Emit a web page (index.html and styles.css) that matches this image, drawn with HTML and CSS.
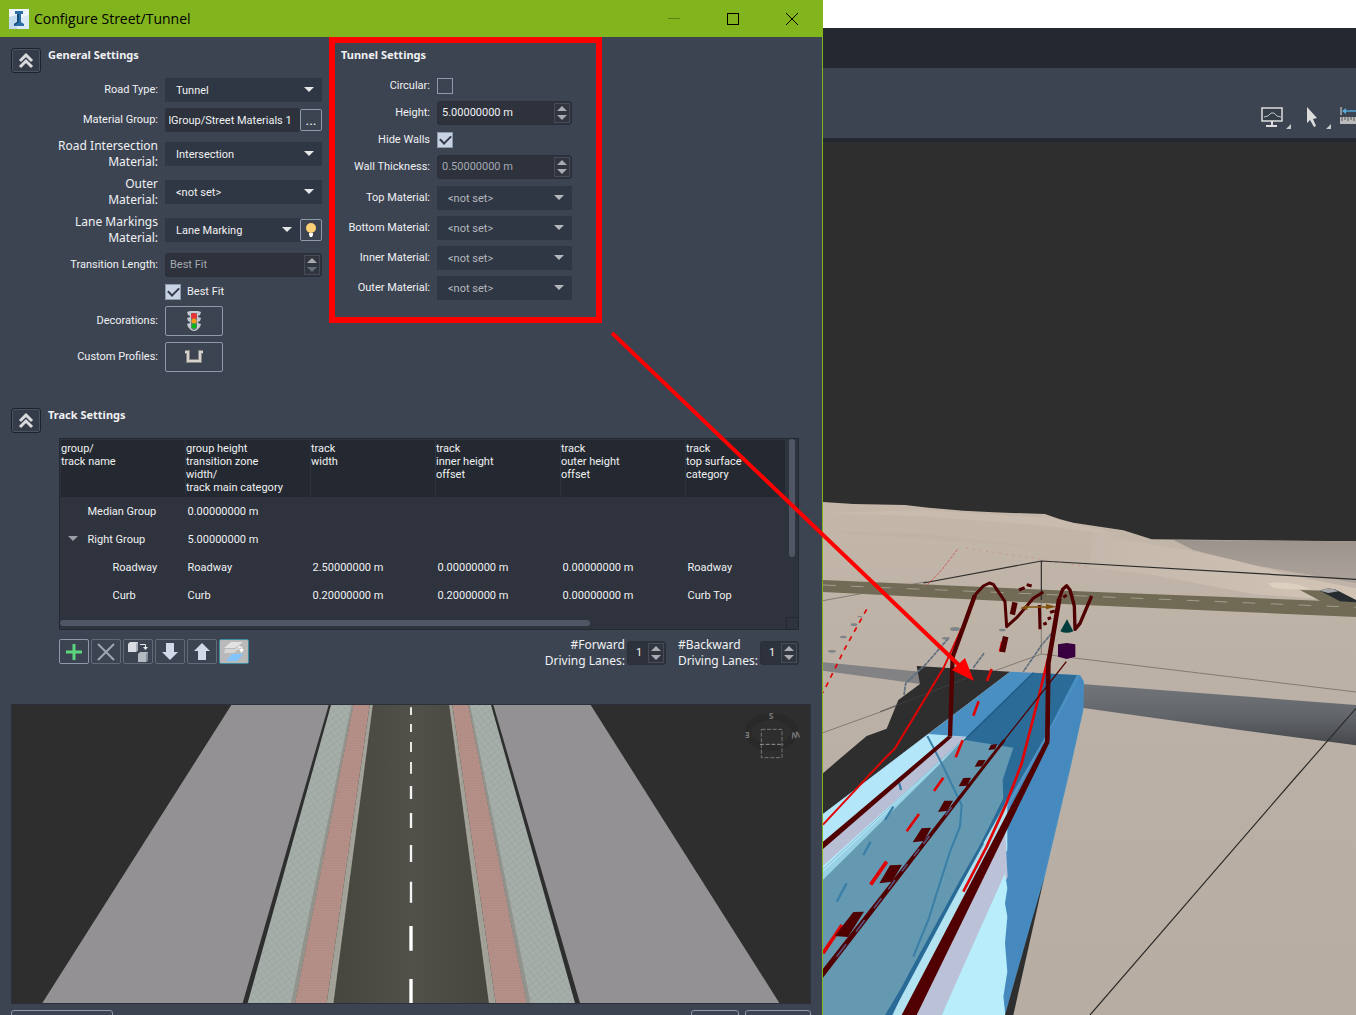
FILE: index.html
```
<!DOCTYPE html>
<html lang="en">
<head>
  <meta charset="UTF-8">
  <meta name="viewport" content="width=device-width, initial-scale=1.0">
  <title>Configure Street/Tunnel</title>
  <link rel="stylesheet" href="styles.css">
</head>
<body>
  <main class="dialog">
    <header class="titlebar">
      <svg class="app-icon" viewBox="0 0 20 20">
        <rect width="20" height="20" fill="#dce9f6"/>
        <path d="M0 0H20V6L0 14Z" fill="#eef5fc"/>
        <path d="M0 8L8 6V20H0Z" fill="#c3d9ee"/>
        <path d="M6 2H14V5H12V13L15 15V17H5V15L8 13V5H6Z" fill="#2b6ea5"/>
        <path d="M8 5H10V13L6 16H5V15L8 13Z" fill="#174a78"/>
      </svg>
      <h1 class="window-title">Configure Street/Tunnel</h1>
      <div class="window-buttons">
        <button class="window-button dim" aria-label="Minimize"><svg viewBox="0 0 12 12"><path d="M0 5.5H12"/></svg></button>
        <button class="window-button" aria-label="Maximize"><svg viewBox="0 0 12 12"><rect x=".5" y=".5" width="11" height="11"/></svg></button>
        <button class="window-button" aria-label="Close"><svg viewBox="0 0 12 12"><path d="M0 0L12 12M12 0L0 12"/></svg></button>
      </div>
    </header>

    <section class="panel">
      <button class="collapse" aria-label="Collapse general settings"><svg viewBox="0 0 16 16"><path d="M2 8L8 2L14 8M2 14L8 8L14 14"/></svg></button>
      <div class="general">
        <h2 class="heading">General Settings</h2>
        <form class="fields">
          <label for="road-type">Road Type:</label>
          <span class="select"><select id="road-type"><option>Tunnel</option></select></span>

          <label for="material-group">Material Group:</label>
          <div class="joined">
            <input id="material-group" class="text" type="text" value="MaterialGroup/Street Materials 1">
            <button type="button" class="small-button">...</button>
          </div>

          <label for="intersection" class="large">Road Intersection<br>Material:</label>
          <span class="select"><select id="intersection"><option>Intersection</option></select></span>

          <label for="outer" class="large">Outer<br>Material:</label>
          <span class="select"><select id="outer"><option>&lt;not set&gt;</option></select></span>

          <label for="markings" class="large">Lane Markings<br>Material:</label>
          <div class="joined">
            <span class="select"><select id="markings"><option>Lane Marking</option></select></span>
            <button type="button" class="small-button" aria-label="Highlight">
              <svg width="12" height="16" viewBox="0 0 12 16"><circle cx="6" cy="6" r="5" fill="#fbcf73"/><path d="M4 11H8V13L7 15H5L4 13Z" fill="#fff"/></svg>
            </button>
          </div>

          <label for="transition">Transition Length:</label>
          <div class="spin disabled">
            <input id="transition" type="text" value="Best Fit" disabled>
            <span class="arrows"><button type="button" class="up" aria-label="Increase"></button><button type="button" class="down faded" aria-label="Decrease"></button></span>
          </div>

          <label class="check second"><input type="checkbox" checked>Best Fit</label>

          <label for="decorations">Decorations:</label>
          <button type="button" id="decorations" class="wide-button" aria-label="Decorations">
            <svg width="18" height="20" viewBox="0 0 18 20">
              <path d="M2 1L5 0H13L16 1L15 4L13 5V6L16 7L15 10L13 11V12L16 13L15 16L12 19L10 20H8L6 19L3 16L2 13L5 12V11L3 10L2 7L5 6V5L3 4Z" fill="#c3c9cf"/>
              <path d="M6 2H12V17L10 19H8L6 17Z" fill="#70787d"/>
              <circle cx="9" cy="5" r="3" fill="#e83434"/><circle cx="9" cy="10" r="2.5" fill="#f79a16"/><circle cx="9" cy="15" r="2.5" fill="#08b51d"/>
            </svg>
          </button>

          <label for="profiles">Custom Profiles:</label>
          <button type="button" id="profiles" class="wide-button" aria-label="Custom profiles">
            <svg width="20" height="16" viewBox="0 0 20 16"><path d="M1 3H4V12H16V3H19" fill="none" stroke="#858585" stroke-width="4"/><path d="M1 3H4V12H16V3H19" fill="none" stroke="#d6d3cd" stroke-width="2"/></svg>
          </button>
        </form>
      </div>

      <div class="tunnel">
        <h2 class="heading">Tunnel Settings</h2>
        <form class="fields">
          <label for="circular">Circular:</label>
          <span class="check"><input id="circular" type="checkbox"></span>

          <label for="height">Height:</label>
          <div class="spin">
            <input id="height" type="text" value="5.00000000 m">
            <span class="arrows"><button type="button" class="up" aria-label="Increase"></button><button type="button" class="down" aria-label="Decrease"></button></span>
          </div>

          <label for="hide-walls">Hide Walls</label>
          <span class="check"><input id="hide-walls" type="checkbox" checked></span>

          <label for="thickness">Wall Thickness:</label>
          <div class="spin disabled">
            <input id="thickness" type="text" value="0.50000000 m" disabled>
            <span class="arrows"><button type="button" class="up" aria-label="Increase"></button><button type="button" class="down" aria-label="Decrease"></button></span>
          </div>

          <label for="top-material">Top Material:</label>
          <span class="select"><select id="top-material" disabled><option>&lt;not set&gt;</option></select></span>
          <label for="bottom-material">Bottom Material:</label>
          <span class="select"><select id="bottom-material" disabled><option>&lt;not set&gt;</option></select></span>
          <label for="inner-material">Inner Material:</label>
          <span class="select"><select id="inner-material" disabled><option>&lt;not set&gt;</option></select></span>
          <label for="outer-material">Outer Material:</label>
          <span class="select"><select id="outer-material" disabled><option>&lt;not set&gt;</option></select></span>
        </form>
      </div>
    </section>

    <section class="panel">
      <button class="collapse" aria-label="Collapse track settings"><svg viewBox="0 0 16 16"><path d="M2 8L8 2L14 8M2 14L8 8L14 14"/></svg></button>
      <div class="track">
        <h2 class="heading">Track Settings</h2>
        <div class="tracks">
          <table>
            <thead>
              <tr>
                <th>group/<br>track name</th>
                <th>group height<br>transition zone<br>width/<br>track main category</th>
                <th>track<br>width</th>
                <th>track<br>inner height<br>offset</th>
                <th>track<br>outer height<br>offset</th>
                <th class="last">track<br>top surface<br>category</th>
              </tr>
            </thead>
            <tbody>
              <tr><td class="group">Median Group</td><td>0.00000000 m</td><td></td><td></td><td></td><td></td></tr>
              <tr><td class="group open">Right Group</td><td>5.00000000 m</td><td></td><td></td><td></td><td></td></tr>
              <tr><td class="child">Roadway</td><td>Roadway</td><td>2.50000000 m</td><td>0.00000000 m</td><td>0.00000000 m</td><td>Roadway</td></tr>
              <tr><td class="child">Curb</td><td>Curb</td><td>0.20000000 m</td><td>0.20000000 m</td><td>0.00000000 m</td><td>Curb Top</td></tr>
            </tbody>
          </table>
          <div class="vscroll"><div class="thumb"></div></div>
          <div class="hscroll"><div class="thumb"></div></div>
          <div class="corner"></div>
        </div>

        <div class="track-bar">
          <button class="tool bright" aria-label="Add track"><svg viewBox="0 0 28 23"><path d="M6 12H22M14 4V20" stroke="#5cd67d" stroke-width="3"/></svg></button>
          <button class="tool" aria-label="Delete track"><svg viewBox="0 0 28 23"><path d="M6 4L22 20M22 4L6 20" stroke="#9fa6b3" stroke-width="2"/></svg></button>
          <button class="tool" aria-label="Duplicate track">
            <svg viewBox="0 0 28 23">
              <path d="M4 4L6 2H14V10L12 12H4Z" fill="#d9dce2"/><path d="M12 4L14 2V10L12 12Z" fill="#a9adb5"/>
              <path d="M14 14L16 12H24V20L22 22H14Z" fill="#b5b9c0"/><path d="M22 14L24 12V20L22 22Z" fill="#858b96"/>
              <path d="M16 4.5H21.5V8" fill="none" stroke="#e8eaee"/><path d="M19 7H24L21.500 10Z" fill="#e8eaee"/>
            </svg>
          </button>
          <button class="tool" aria-label="Move down"><svg viewBox="0 0 28 23"><path d="M10 3H18V12H22L14 20L6 12H10Z" fill="#d2daea"/></svg></button>
          <button class="tool" aria-label="Move up"><svg viewBox="0 0 28 23"><path d="M10 20H18V11H22L14 3L6 11H10Z" fill="#d2daea"/></svg></button>
          <button class="tool active" aria-label="Show layers">
            <svg viewBox="0 0 28 23">
              <path d="M11 2H23L15 8H4Z" fill="#e2e2e2"/><path d="M5 9H15L20 5V8L14 13H4Z" fill="#d5d5d5"/>
              <path d="M12 14H23L17 21H6Z" fill="#82c4ff"/><path d="M18 7H21.500V10" fill="none" stroke="#fff"/><path d="M19 9H24L21.500 13Z" fill="#fff"/>
            </svg>
          </button>
          <label for="forward" class="large push">#Forward<br>Driving Lanes:</label>
          <div class="spin short">
            <input id="forward" type="text" value="1">
            <span class="arrows"><button class="up" aria-label="Increase"></button><button class="down" aria-label="Decrease"></button></span>
          </div>
          <label for="backward" class="large backward">#Backward<br>Driving Lanes:</label>
          <div class="spin short">
            <input id="backward" type="text" value="1">
            <span class="arrows"><button class="up" aria-label="Increase"></button><button class="down" aria-label="Decrease"></button></span>
          </div>
        </div>
      </div>
    </section>

    <div class="preview">
      <svg viewBox="36 45 2394 894" preserveAspectRatio="xMidYMid slice">
        <defs>
          <pattern id="tiles" width="22" height="22" patternUnits="userSpaceOnUse" patternTransform="rotate(8)">
            <path d="M0 0L22 22M22 0L0 22" stroke="#818b86" stroke-width="1.5" opacity=".5"/>
          </pattern>
          <pattern id="bricks" width="12" height="10" patternUnits="userSpaceOnUse">
            <path d="M0 1H12M2 1V6M0 6H12M8 6V10" stroke="#946f6a" stroke-width="1.2" opacity=".5"/>
          </pattern>
          <linearGradient id="asphalt">
            <stop offset="0" stop-color="#46463f"/><stop offset=".5" stop-color="#51514a"/><stop offset="1" stop-color="#46463f"/>
          </linearGradient>
        </defs>
        <rect x="36" y="45" width="2394" height="894" fill="#2e2e2e"/>
        <path d="M694 45H986L728 939H127ZM1480 45H1772L2338 939H1740Z" fill="#949194"/>
        <path d="M993 45H1060L885 939H743ZM1405 45H1473L1725 939H1580Z" fill="#a5aea9"/>
        <path d="M993 45H1060L885 939H743ZM1405 45H1473L1725 939H1580Z" fill="url(#tiles)"/>
        <path d="M1060 45H1109L980 939H885ZM1357 45H1405L1580 939H1487Z" fill="#b8938b"/>
        <path d="M1060 45H1109L980 939H885ZM1357 45H1405L1580 939H1487Z" fill="url(#bricks)"/>
        <path d="M1054 45H1060L885 939H873ZM1405 45H1410L1592 939H1580Z" fill="#92938c"/>
        <path d="M1109 45H1117L999 939H980ZM1349 45H1357L1487 939H1468Z" fill="#a1a198"/>
        <path d="M1117 45H1349L1468 939H999Z" fill="url(#asphalt)"/>
        <path d="M1117 45L999 939M1349 45L1468 939" stroke="#c5c5bd" stroke-width="2"/>
        <path d="M1233 52V75M1233 102V126M1233 156V186M1233 216V251" stroke="#e6e6e4" stroke-width="6"/>
        <path d="M1233 288V327M1233 369V414M1233 465V516M1233 575V638" stroke="#f3f3f3" stroke-width="7"/>
        <path d="M1233 708V782M1233 867V939" stroke="#fff" stroke-width="10"/>
        <ellipse cx="2314" cy="126" rx="70" ry="46" fill="none" stroke="#292929" stroke-width="20"/>
        <g fill="none" stroke="#858585" stroke-width="2.5" stroke-dasharray="12 5">
          <path d="M2284 118H2346V203H2284Z"/><path d="M2280 163H2350" stroke="#aaa"/>
        </g>
        <g class="compass">
          <text x="2306" y="86">S</text>
          <text x="2242" y="126" transform="rotate(180 2242 132)" text-anchor="middle" dy="12">E</text>
          <text x="2386" y="126" transform="rotate(170 2386 132)" text-anchor="middle" dy="12">W</text>
        </g>
      </svg>
    </div>

    <footer class="actions">
      <button class="action" aria-label="Help"></button>
      <button class="action ok" aria-label="OK"></button>
      <button class="action cancel" aria-label="Cancel"></button>
    </footer>
  </main>

  <aside class="model">
    <div class="model-menu"></div>
    <div class="model-tools">
      <button class="model-tool" aria-label="View">
        <svg width="38" height="24" viewBox="0 0 38 24">
          <rect x="2" y="2" width="20" height="13" fill="#353d49" stroke="#dcdcdc" stroke-width="1.5"/>
          <path d="M4 11L8 10L11 7L14 7L17 10L21 11" fill="none" stroke="#bfc3c8"/>
          <path d="M11 15H13V19H17V21H6V19H11Z" fill="#dcdcdc"/><path d="M31 18V23H26Z" fill="#c5c7ca"/>
        </svg>
      </button>
      <button class="model-tool" aria-label="Select">
        <svg width="26" height="24" viewBox="0 0 26 24"><path d="M1 1V17L4 14L8 21L10 20L7 13L11 12Z" fill="#dcdcdc"/><path d="M25 18V23H20Z" fill="#c5c7ca"/></svg>
      </button>
      <button class="model-tool" aria-label="Measure">
        <svg width="16" height="24" viewBox="0 0 16 24"><path d="M1 1V9" stroke="#ddd"/><path d="M3 5H16" stroke="#4c8db5" stroke-width="2"/><path d="M6 2V8L2 5Z" fill="#5bacd8"/><rect y="11" width="16" height="7" fill="#bcbcbc"/><path d="M2 11V15M5 11V14M8 11V15M11 11V14M14 11V15" stroke="#555"/></svg>
      </button>
    </div>

    <svg class="scene" viewBox="9 -1044 1599 2619" preserveAspectRatio="xMinYMin slice">
      <defs>
        <linearGradient id="ground" x1="0" y1="0" x2="0" y2="1"><stop offset="0" stop-color="#c4b7aa"/><stop offset=".3" stop-color="#bcb1a6"/><stop offset="1" stop-color="#b7ada2"/></linearGradient>
        <linearGradient id="wall" x1="0" y1="0" x2="0" y2="1"><stop offset="0" stop-color="#71757a"/><stop offset=".5" stop-color="#63676c"/><stop offset="1" stop-color="#45474a"/></linearGradient>
        <linearGradient id="hill" x1="0" y1="0" x2="1" y2="0"><stop offset="0" stop-color="#c4b8ac"/><stop offset="1" stop-color="#d2c4b5"/></linearGradient>
        <linearGradient id="far" x1="0" y1="0" x2="0" y2="1"><stop offset="0" stop-color="#9c938d"/><stop offset="1" stop-color="#ada39b"/></linearGradient>
      </defs>
      <!-- sky and terrain -->
      <rect x="9" y="-1044" width="1599" height="2619" fill="#2e2e2e"/>
      <path d="M9 36L100 42L255 45L325 53L430 62L520 67L675 72L720 88L760 98L910 121L995 148L1608 154V1575H9Z" fill="url(#ground)"/>
      <path d="M1060 150L1608 154V280L1440 250L1300 225L1120 180Z" fill="url(#far)"/>
      <path d="M820 118L905 148L1110 182L1240 210L1440 262L1608 295V335L1300 312L1000 255L810 232Z" fill="url(#hill)"/>
      <path d="M9 70L300 60L700 85L900 135L650 105L300 78Z" fill="#c9bcaf"/>
      <path d="M9 125L300 130L700 175L350 150Z" fill="#bfb3a7"/>
      <path d="M1345 280Q1410 270 1470 296Q1400 300 1360 293Z" fill="#ddd0c1"/>
      <!-- cross road -->
      <path d="M9 270L810 305L1500 332L1440 300L1530 302L1608 330V381L810 346L9 306Z" fill="#716b55"/>
      <path d="M9 285L860 321L1608 352" fill="none" stroke="#a19d8b" stroke-width="3" stroke-dasharray="38 46"/>
      <path d="M1500 302Q1530 288 1560 305L1608 330V337L1560 334Z" fill="#252b2e"/>
      <path d="M1500 302Q1530 288 1555 304L1525 309Z" fill="#a4a5a7"/>
      <!-- retaining wall -->
      <path d="M9 517L300 545V582L9 542Z" fill="#828183"/>
      <path d="M785 582L1608 645V766L1260 720L785 653Z" fill="url(#wall)"/>
      <g fill="none" stroke="#777068" stroke-width="2.5">
        <path d="M9 332L320 275M664 492L1608 606M664 492L9 728M664 330V492"/>
        <path d="M310 279L664 213L1608 268M664 213V330M1608 655L1420 870L810 1575" stroke="#2c2b2a" stroke-width="3.5"/>
      </g>
      <path d="M322 284L365 240L415 175" fill="none" stroke="#d24b48" stroke-width="2.5" stroke-dasharray="9 4"/>
      <path d="M440 175L520 187L660 207L800 230" fill="none" stroke="#d07b74" stroke-width="3" stroke-dasharray="3 17"/>
      <!-- trench -->
      <path d="M290 528L570 545L300 750L9 972V850L55 810L140 738L200 716L235 630L300 582Z" fill="#2e2e2e"/>
      <path d="M180 665L450 560" stroke="#444" stroke-width="2"/>
      <!-- tunnel -->
      <path d="M570 545L780 555L792 575L790 660L750 840L672 1170L555 1575H9V972L325 732Z" fill="#4a8fc1"/>
      <path d="M780 557L670 750L560 950L610 940L740 740L792 575Z" fill="#5a99cb"/>
      <path d="M780 557L668 760L570 940L555 1200V1575L672 1150L755 800L790 655V575Z" fill="#4589be"/>
      <path d="M640 548L770 556L670 750L560 940L215 1575H9V1170L370 808Z" fill="#2b6b98"/>
      <path d="M640 548L370 812" stroke="#205b85" stroke-width="4"/>
      <path d="M435 750L580 773L548 870L550 925L480 1065L420 1170L300 1390L240 1500L195 1575H9V1170L370 810Z" fill="#6499b1"/>
      <path d="M325 732L440 740L9 1165V972Z" fill="#b2e6f8"/>
      <path d="M395 738L438 742L9 1128V1065Z" fill="#b8bed4"/>
      <path d="M440 742L9 1145V1170L370 812Z" fill="#98d1e4"/>
      <path d="M425 752L9 1138" stroke="#6ea6bf" stroke-width="2"/>
      <path d="M562 925L215 1575H300L562 1080Z" fill="#b3e2f1"/>
      <path d="M555 1025L563 1160L365 1575H270Z" fill="#bbc1d7"/>
      <path d="M555 1150L562 1195L555 1240L562 1280L555 1360L562 1445L550 1520L556 1575H365Z" fill="#b8eefc"/>
      <path d="M672 1165L580 1575H555L630 1310Z" fill="#2e2e2e"/>
      <path d="M555 940L480 1070M490 1060L270 1450L215 1575" fill="none" stroke="#266995" stroke-width="6" opacity=".7"/>
      <!-- shadows of the guide wires -->
      <g fill="none" stroke="#397fa8" stroke-width="7">
        <path d="M322 738L365 820L425 945L420 1010L390 1085L350 1210L325 1290L300 1350L280 1400" stroke-width="6"/>
        <path d="M152 1055L130 1095M80 1180L50 1235M238 880L243 900M220 950L195 990"/>
      </g>
      <g fill="none" stroke="#5f6e7e" stroke-width="5">
        <path d="M695 430L665 465L610 545M492 490L460 533M385 445L320 520L257 580L252 615" stroke-dasharray="12 2"/>
      </g>
      <g fill="#7f8488"><ellipse cx="405" cy="417" rx="15" ry="6"/><ellipse cx="378" cy="445" rx="12" ry="4"/><ellipse cx="547" cy="420" rx="10" ry="4"/><ellipse cx="102" cy="404" rx="10" ry="4"/><ellipse cx="70" cy="441" rx="10" ry="4"/><ellipse cx="36" cy="484" rx="12" ry="4"/><ellipse cx="120" cy="380" rx="8" ry="2"/></g>
      <!-- red guide lines -->
      <g fill="none" stroke="#e00505">
        <path d="M140 358L75 475L9 608" stroke-width="5" stroke-dasharray="15 16"/>
        <path d="M425 415L370 535L225 775L190 810L9 1004" stroke-width="6"/>
        <path d="M688 490L655 625L605 820L590 860L555 950L500 1070L430 1205" stroke-width="8"/>
        <path d="M515 537L501 573M476 634L460 677M428 751L407 802M370 863L342 903M297 972L260 1024M547 455L540 485" stroke-width="8"/>
        <path d="M200 1115L152 1184M66 1305L9 1390" stroke-width="11"/>
      </g>
      <g fill="none" stroke="#500000" stroke-linejoin="round">
        <path d="M390 740L398 500L465 315" stroke-width="13"/>
        <path d="M465 315L490 288L508 279L520 283L555 335L560 410L590 383L640 325L670 306" stroke-width="9"/>
        <path d="M682 755L685 520L718 325" stroke-width="14"/>
        <path d="M718 325L728 298L740 287L750 300L763 348L765 418L780 400L815 318" stroke-width="10"/>
        <path d="M658 345L660 418" stroke-width="9"/>
        <path d="M739 515L640 640L545 760" stroke-width="4"/>
        <path d="M585 337L577 374" stroke-width="16"/>
        <path d="M557 440L547 486" stroke-width="17"/>
        <path d="M597 300L614 293M620 284L635 288M690 367L704 363M683 387L693 383M670 403L680 399M730 322L740 315" stroke-width="9"/>
      </g>
      <g fill="#500000">
        <path d="M384 738L396 742L9 1077V1055Z"/>
        <path d="M676 752L689 757L290 1575H245Z"/>
        <path d="M550 748L557 752L9 1463V1436Z"/>
        <path d="M513 764L532 762L525 778L505 780Z"/><path d="M475 811L497 810L486 829L464 830Z"/><path d="M430 864L453 863L442 887L416 889Z"/><path d="M373 932L399 932L382 962L354 966Z"/><path d="M305 1015L333 1013L312 1053L278 1057Z"/><path d="M210 1126L246 1124L216 1175L178 1180Z"/><path d="M100 1266L132 1265L84 1341L44 1338Z"/>
      </g>
      <path d="M395 952L376 976M328 1038L310 1062M298 1077L282 1098M262 1122L246 1144M225 1170L205 1198M184 1225L162 1255M134 1290L108 1325M78 1363L50 1400" stroke="#58517c" stroke-width="5"/>
      <!-- gizmo -->
      <path d="M600 355L622 344V349H678V342L710 350L678 358V353H622V360Z" fill="#81500d"/>
      <path d="M741 388L760 424Q740 433 721 424Z" fill="#003d3c"/>
      <path d="M714 463L740 459L766 463V500L740 507L714 500Z" fill="#39003f"/>
    </svg>
  </aside>

  <svg class="callout" width="363" height="350" viewBox="0 0 363 350" aria-hidden="true">
    <path d="M1 1L350 335" stroke="#f00" stroke-width="4"/>
    <path d="M363 349L341 338L354 326Z" fill="#f00"/>
  </svg>

  <script>
    // long material paths show their end
    var group = document.getElementById('material-group');
    group.scrollLeft = group.scrollWidth;
  </script>
</body>
</html>
```
FILE: styles.css
```
* {
  box-sizing: border-box;
}

body {
  margin: 0;
  height: 100vh;
  display: grid;
  grid-template-columns: minmax(760px, 823fr) minmax(0, 533fr);
  overflow: hidden;
  position: relative;
  background-color: #fff;
  color: #f0f1f2;
  font-family: Roboto, "Noto Sans", sans-serif;
  font-size: 11px;
  line-height: 16px;
}

button, input, select {
  margin: 0;
  padding: 0;
  border: 0;
  outline: 0;
  border-radius: 0;
  background: none;
  color: inherit;
  font: inherit;
}

button {
  display: flex;
  align-items: center;
  justify-content: center;
}

svg {
  display: block;
}

.dialog {
  background-color: #3c4452;
  border-right: 1px solid #82b41e;
  overflow: hidden;
}

.titlebar {
  display: flex;
  align-items: center;
  height: 37px;
  padding-left: 9px;
  padding-right: 1px;
  gap: 5px;
  background-color: #82b41e;
  color: #000;
}

.app-icon {
  width: 20px;
  height: 20px;
}

.window-title {
  margin: 0;
  font-family: "Open Sans", sans-serif;
  font-size: 14px;
  font-weight: 400;
}

.window-buttons {
  display: flex;
  margin-left: auto;
}

.window-button {
  width: 59px;
  height: 36px;
}

.window-button svg {
  width: 12px;
  height: 12px;
  fill: none;
  stroke: #000;
}

.dim svg {
  stroke: #5d8017;
}

.panel {
  display: flex;
  align-items: flex-start;
  gap: 7px;
  padding-left: 11px;
}

.collapse {
  flex: none;
  width: 30px;
  height: 25px;
  margin-top: 11px;
  border: 1px solid #1e232b;
  border-radius: 3px;
  background-color: #353c49;
  box-shadow: inset 0 0 0 1px #4b5361;
}

.collapse svg {
  width: 16px;
  height: 16px;
  fill: none;
  stroke: #d9dadc;
  stroke-width: 3;
}

.heading {
  margin: 0 0 15px;
  font-family: "Noto Sans", sans-serif;
  font-size: 11px;
  font-weight: 700;
  line-height: 16px;
}

.general {
  width: 274px;
  padding-top: 10px;
  margin-bottom: 25px;
}

.tunnel {
  width: 273px;
  padding: 4px 24px 17px 6px;
  border: 6px solid #f00;
}

.fields {
  display: grid;
  grid-template-columns: 1fr 157px;
  column-gap: 7px;
  row-gap: 6px;
  align-items: center;
}

.tunnel .fields {
  grid-template-columns: 1fr 135px;
}

.fields > label {
  text-align: right;
  white-space: nowrap;
}

.large {
  font-family: "Noto Sans", sans-serif;
  font-size: 12px;
  line-height: 16px;
  text-align: right;
}

.select {
  position: relative;
  display: block;
  flex: 1;
}

.select select {
  appearance: none;
  display: block;
  width: 100%;
  height: 24px;
  padding: 1px 24px 0 11px;
  background-color: #303744;
  opacity: 1;
}

.select select:disabled {
  color: #b4b8be;
}

.select::after {
  content: "";
  position: absolute;
  right: 8px;
  top: 9px;
  border: 5px solid transparent;
  border-top-color: #e6e7e9;
  border-bottom: 0;
}

.tunnel .select::after {
  border-top-color: #b4b7bb;
}

.joined {
  display: flex;
  align-items: center;
}

.text {
  flex: 1;
  min-width: 0;
  height: 24px;
  padding: 0 8px 0 4px;
  border-radius: 3px;
  background-color: #2d323d;
}

.small-button {
  width: 22px;
  height: 22px;
  border: 1px solid #8d9aaa;
  border-radius: 2px;
  font-size: 14px;
}

.spin {
  display: flex;
  height: 24px;
  margin: 1px 0;
  padding: 1px;
  border: 1px solid #2a2f39;
  border-radius: 3px;
  background-color: #2d323d;
}

.spin input {
  flex: 1;
  min-width: 0;
  padding-left: 3px;
}

.spin.disabled input {
  color: #a5a9b0;
}

.arrows {
  display: flex;
  flex-direction: column;
  justify-content: center;
  gap: 4px;
  width: 16px;
  align-items: center;
  border: 1px solid #454b57;
  background-color: #303540;
}

.up, .down {
  border: 5px solid transparent;
}

.up {
  border-top: 0;
  border-bottom-color: #a9abb0;
}

.down {
  border-bottom: 0;
  border-top-color: #a9abb0;
}

.faded {
  border-top-color: #666b74;
}

.check {
  display: flex;
  align-items: center;
  gap: 6px;
}

.check input {
  appearance: none;
  width: 16px;
  height: 16px;
  border: 1px solid #8d9aaa;
}

.check input:checked {
  display: grid;
  place-items: center;
  background-color: #c8d4e6;
}

.check input:checked::after {
  content: "";
  width: 9px;
  height: 5px;
  margin-bottom: 3px;
  border: 2px solid #333b49;
  border-top: 0;
  border-right: 0;
  transform: rotate(-45deg);
}

.second {
  grid-column: 2;
}

.wide-button {
  width: 58px;
  height: 30px;
  border: 1px solid #8d9aaa;
  border-radius: 2px;
}

.track {
  flex: 1;
  min-width: 0;
  padding: 10px 23px 0 0;
}

.tracks {
  display: grid;
  grid-template-columns: minmax(0, 1fr) 12px;
  grid-template-rows: 178px 12px;
  margin-left: 11px;
  border: 1px solid #232831;
  background-color: #2e333e;
}

table {
  width: 100%;
  table-layout: fixed;
  border-collapse: collapse;
  align-self: start;
}

th {
  width: 125px;
  height: 58px;
  padding: 2px 0 0;
  border: 1px solid #2e333e;
  background-color: #232831;
  font-weight: 400;
  line-height: 13px;
  text-align: left;
  vertical-align: top;
}

.last {
  width: auto;
}

td {
  height: 28px;
  padding: 0 0 0 2px;
  white-space: nowrap;
}

.group {
  padding-left: 27px;
}

.open::before {
  content: "";
  display: inline-block;
  margin: 0 10px 2px -20px;
  border: 5px solid transparent;
  border-top-color: #9b9ea4;
  border-bottom: 0;
}

.child {
  padding-left: 52px;
}

.vscroll {
  padding-left: 3px;
}

.thumb {
  border-radius: 3px;
  background-color: #505664;
}

.vscroll .thumb {
  width: 6px;
  height: 118px;
}

.hscroll {
  padding-top: 3px;
}

.hscroll .thumb {
  width: 73%;
  height: 6px;
}

.corner {
  border: 1px solid #232831;
  border-right: 0;
  border-bottom: 0;
}

.track-bar {
  display: flex;
  align-items: center;
  gap: 2px;
  margin: 7px 0 0 11px;
}

.tool {
  align-self: flex-start;
  width: 30px;
  height: 25px;
  margin-top: 2px;
  border: 1px solid #626a78;
  border-radius: 2px;
}

.tool svg {
  width: 28px;
  height: 23px;
}

.bright {
  border-color: #8d9aaa;
}

.active {
  border-color: #3f8c9e;
  background-color: #b9b9b9;
}

.push {
  margin-left: auto;
}

.backward {
  margin-left: 10px;
  text-align: left;
}

.short {
  width: 39px;
}

.short input {
  padding-left: 7px;
}

.preview {
  margin: 35px 11px 0;
  border: 1px solid #2b303a;
}

.preview svg {
  width: 100%;
  height: 298px;
}

.compass {
  fill: #777;
  font-family: "Noto Sans", sans-serif;
  font-size: 26px;
  font-weight: 700;
}

.actions {
  display: flex;
  gap: 6px;
  margin: 6px 11px;
}

.action {
  width: 102px;
  height: 24px;
  border: 1px solid #8d9aaa;
  border-radius: 3px;
}

.ok {
  width: 48px;
  margin-left: auto;
}

.cancel {
  width: 66px;
}

.model {
  display: flex;
  flex-direction: column;
  min-width: 0;
  min-height: 0;
  padding-top: 28px;
}

.model-menu {
  flex: none;
  height: 40px;
  background-color: #232831;
}

.model-tools {
  display: flex;
  flex: none;
  justify-content: flex-end;
  align-items: center;
  gap: 8px;
  height: 74px;
  padding-top: 30px;
  border-bottom: 4px solid #232831;
  background-color: #3c4452;
}

.scene {
  flex: 1;
  width: 100%;
  min-height: 0;
}

/* red arrow from the tunnel settings to the model */
.callout {
  position: absolute;
  left: 611px;
  top: 332px;
}
```
